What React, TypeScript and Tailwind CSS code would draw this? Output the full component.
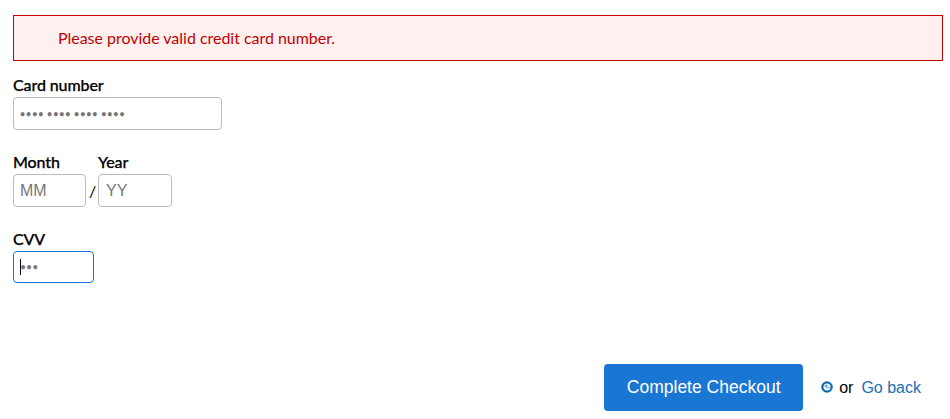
export default function App() {
  return (
    <div className="h-[419px] w-[950px] overflow-hidden bg-white pl-[13px] pr-[7px] pt-[15px] font-['Lato',sans-serif] text-[16px] text-black">
      {/* error banner */}
      <div className="flex h-[46px] items-center border border-[#cc0000] bg-[#fff0f0] pl-[44px] text-[15.95px] text-[#bf0000]">
        Please provide valid credit card number.
      </div>

      <form className="mt-[14px]">
        <label className="block h-[22px] text-[16px] font-medium leading-[20px] tracking-[-0.1px] [-webkit-text-stroke:0.25px_black]">Card number</label>
        <input
          readOnly
          placeholder="•••• •••• •••• ••••"
          className="block h-[33px] w-[209px] rounded-[4px] border border-[#bbbbbb] px-[5.5px] text-[10.5px] placeholder:text-[#777777]"
        />

        <div className="mt-[22px] flex items-end">
          <div className="w-[73px]">
            <label className="block h-[22px] font-medium leading-[20px] tracking-[-0.1px] [-webkit-text-stroke:0.25px_black]">Month</label>
            <input
              readOnly
              placeholder="MM"
              className="block h-[33px] w-[73px] rounded-[4px] border border-[#bbbbbb] px-[6px] font-['Liberation_Sans',sans-serif] text-[16px] placeholder:text-[#777777]"
            />
          </div>
          <span className="flex h-[33px] w-[12px] items-center justify-center pl-px text-[16px]">/</span>
          <div className="w-[74px]">
            <label className="block h-[22px] font-medium leading-[20px] tracking-[-0.1px] [-webkit-text-stroke:0.25px_black]">Year</label>
            <input
              readOnly
              placeholder="YY"
              className="block h-[33px] w-[74px] rounded-[4px] border border-[#bbbbbb] px-[7px] font-['Liberation_Sans',sans-serif] text-[16px] placeholder:text-[#777777]"
            />
          </div>
        </div>

        <label className="mt-[22px] block h-[22px] font-medium leading-[20px] tracking-[-0.1px] [-webkit-text-stroke:0.25px_black]">CVV</label>
        <div className="relative h-[32px] w-[81px]">
          <input
            readOnly
            placeholder="•••"
            className="block h-[32px] w-[81px] rounded-[4px] border border-[#1976d2] px-[6px] text-[10.5px] placeholder:text-[#777777]"
          />
          <span className="absolute left-[7px] top-[8px] h-[16px] w-px bg-black" />
        </div>
      </form>

      <div className="mt-[81px] flex items-center justify-end pr-[22px] font-['Liberation_Sans',sans-serif] text-[16px]">
        <button className="h-[47px] w-[199px] rounded-[4px] bg-[#1976d2] text-[17.5px] text-white">Complete Checkout</button>
        <svg viewBox="0 0 12 12" className="mb-[2px] ml-[18px] h-[12px] w-[12px]">
          <circle cx="6" cy="6" r="4.7" fill="none" stroke="#0f6cb3" strokeWidth="2.2" />
          <path d="M2.6 5.6 L6.4 3.4 L6.4 5.6 Z" fill="#0f6cb3" />
          <path d="M5 6.7 L9.8 6.7" stroke="#0f6cb3" strokeWidth="0.6" />
        </svg>
        <span className="ml-[6px]">or</span>
        <a className="ml-[8px] text-[#1a6fb5]">Go back</a>
      </div>
    </div>
  );
}
